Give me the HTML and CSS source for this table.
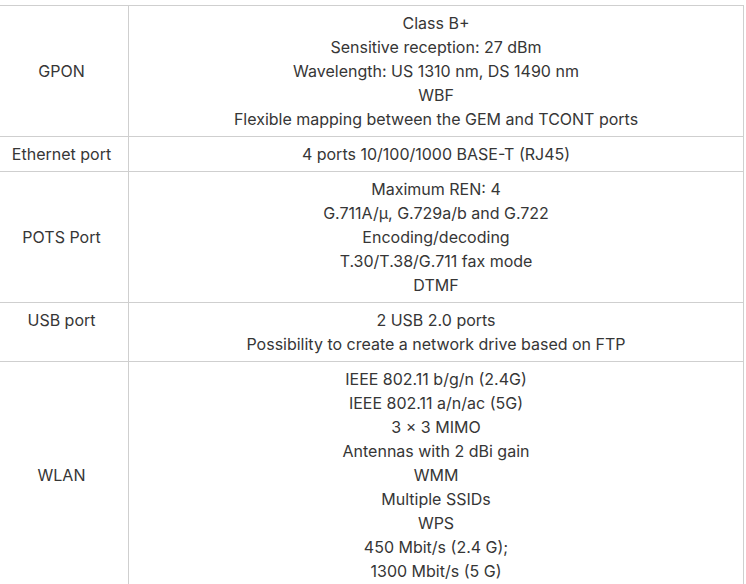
FILE: index.html
```html
<!DOCTYPE html>
<html>
<head>
<meta charset="utf-8">
<link rel="stylesheet" href="styles.css">
</head>
<body>
<table class="spec">
  <tr>
    <td class="label">GPON</td>
    <td class="value">Class B+<br>Sensitive reception: 27 dBm<br>Wavelength: US 1310 nm, DS 1490 nm<br>WBF<br>Flexible mapping between the GEM and TCONT ports</td>
  </tr>
  <tr>
    <td class="label">Ethernet port</td>
    <td class="value">4 ports 10/100/1000 BASE-T (RJ45)</td>
  </tr>
  <tr>
    <td class="label">POTS Port</td>
    <td class="value">Maximum REN: 4<br>G.711A/μ, G.729a/b and G.722<br>Encoding/decoding<br>T.30/T.38/G.711 fax mode<br>DTMF</td>
  </tr>
  <tr>
    <td class="label label-top">USB port</td>
    <td class="value">2 USB 2.0 ports<br>Possibility to create a network drive based on FTP</td>
  </tr>
  <tr>
    <td class="label">WLAN</td>
    <td class="value">IEEE 802.11 b/g/n (2.4G)<br>IEEE 802.11 a/n/ac (5G)<br>3 × 3 MIMO<br>Antennas with 2 dBi gain<br>WMM<br>Multiple SSIDs<br>WPS<br>450 Mbit/s (2.4 G);<br>1300 Mbit/s (5 G)</td>
  </tr>
</table>
</body>
</html>
```

FILE: styles.css
```css
html, body {
  margin: 0;
  padding: 0;
  background: #fff;
}
body {
  padding-top: 5px;
  overflow: hidden;
}
.spec {
  border-collapse: collapse;
  margin-left: -6px;
  width: 750px;
  font-family: Inter, "Noto Sans", sans-serif;
  font-size: 16px;
  line-height: 24px;
  color: #363636;
}
.spec td {
  border: 1px solid #cfcfcf;
  padding: 5px 4px;
  text-align: center;
  vertical-align: middle;
}
.spec .label {
  width: 125px;
}
.spec .label-top {
  vertical-align: top;
}
```
